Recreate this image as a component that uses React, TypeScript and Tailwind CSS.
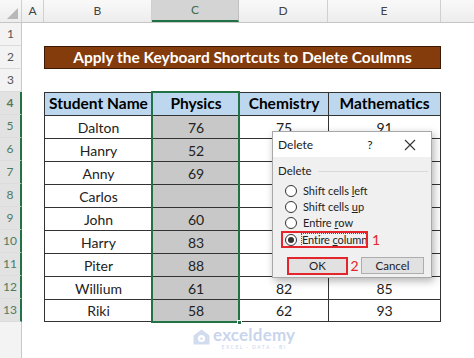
import React from 'react';

type Row = { n: number; name: string; p: string; c: string; m: string };

// D and E values for rows 6-11 sit under the dialog in the screenshot
const data: Row[] = [
  { n: 5, name: 'Dalton', p: '76', c: '75', m: '91' },
  { n: 6, name: 'Hanry', p: '52', c: '', m: '' },
  { n: 7, name: 'Anny', p: '69', c: '', m: '' },
  { n: 8, name: 'Carlos', p: '', c: '', m: '' },
  { n: 9, name: 'John', p: '60', c: '', m: '' },
  { n: 10, name: 'Harry', p: '83', c: '', m: '' },
  { n: 11, name: 'Piter', p: '88', c: '', m: '' },
  { n: 12, name: 'Willium', p: '61', c: '82', m: '85' },
  { n: 13, name: 'Riki', p: '58', c: '62', m: '93' },
];

function RowHead({ n, sel }: { n?: number; sel?: boolean }) {
  return (
    <div
      className={`w-[22px] shrink-0 flex items-center justify-center text-[12px] border-b border-[#dcdcdc] ${
        sel ? 'bg-[#e2e2e2] text-[#4e7a60] border-r-2 border-r-[#217346]' : 'bg-[#f3f3f3] text-[#555] border-r border-r-[#c8c8c8]'
      }`}
    >
      {n}
    </div>
  );
}

function Radio({ on }: { on?: boolean }) {
  return (
    <span className="w-[12px] h-[12px] shrink-0 rounded-full border border-[#333] bg-white flex items-center justify-center">
      {on && <span className="w-[6px] h-[6px] rounded-full bg-[#333]" />}
    </span>
  );
}

function DeleteDialog() {
  return (
    <div className="absolute left-[272px] top-[131px] w-[160px] h-[147px] border border-[#a8a8a8] bg-[#f0f0f0] shadow-[2px_3px_8px_rgba(0,0,0,0.3)] font-['Lato',sans-serif] text-[11px] text-[#222] flex flex-col">
      <div className="h-[25px] bg-white flex items-center pl-[5px] pr-[13px] text-[12px]">
        <span className="flex-1">Delete</span>
        <span className="w-[16px] text-center">?</span>
        <svg className="ml-[24px]" width="16" height="12" viewBox="0 0 16 12">
          <path d="M3 1 L13 11 M13 1 L3 11" stroke="#333" strokeWidth="1.1" fill="none" />
        </svg>
      </div>
      <div className="mt-[7px] h-[14px] flex items-center pl-[5px] pr-[3px] gap-[6px] text-[11.5px]">
        <span>Delete</span>
        <span className="flex-1 h-px bg-[#d9d9d9]" />
      </div>
      <div className="mt-[5px] flex flex-col">
        <div className="h-[16px] flex items-center pl-[12px] gap-[6px]">
          <Radio />
          <span>
            Shift cells <span className="underline">l</span>eft
          </span>
        </div>
        <div className="h-[16px] flex items-center pl-[12px] gap-[6px]">
          <Radio />
          <span>
            Shift cells <span className="underline">u</span>p
          </span>
        </div>
        <div className="h-[16px] flex items-center pl-[12px] gap-[6px]">
          <Radio />
          <span>
            Entire <span className="underline">r</span>ow
          </span>
        </div>
        <div className="h-[17px] flex items-center">
          <div className="ml-[8px] w-[87px] h-[17px] border-2 border-[#e4252b] flex items-center pl-[2px] gap-[5px] overflow-hidden whitespace-nowrap">
            <Radio on />
            <span className="outline outline-1 outline-dotted outline-[#555] leading-[12px] tracking-[-0.1px]">
              Entire <span className="underline">c</span>olumn
            </span>
          </div>
          <span className="ml-[4px] text-[14px] text-[#e4252b]">1</span>
        </div>
      </div>
      <div className="mt-[7px] flex items-center text-[11.5px]">
        <div className="ml-[14px] w-[61px] h-[18px] border-2 border-[#e4252b] bg-[#e1e1e1] flex items-center justify-center">
          OK
        </div>
        <span className="w-[13px] text-center text-[14px] text-[#e4252b]">2</span>
        <div className="w-[63px] h-[17px] border border-[#adadad] bg-[#e1e1e1] flex items-center justify-center">
          Cancel
        </div>
      </div>
    </div>
  );
}

function Watermark() {
  return (
    <div className="absolute left-[193px] top-[329px] flex items-start gap-[3px] text-[#c9d5ec]">
      <svg width="17" height="16" viewBox="0 0 17 16">
        <path d="M8.5 0.5 L16.5 6.5 L16.5 15.5 L0.5 15.5 L0.5 6.5 Z" fill="#d2dcef" />
        <circle cx="8.5" cy="9.5" r="3.6" fill="#ffffff" />
        <path d="M6.5 10.5 L8.5 8 L10.5 10.5 Z" fill="#d2dcef" />
      </svg>
      <div className="flex flex-col items-center -mt-[3px]">
        <span className="text-[17px] font-bold leading-[18px] tracking-[0.2px]">exceldemy</span>
        <span className="text-[5px] leading-[6px] tracking-[1.5px]">EXCEL · DATA · BI</span>
      </div>
    </div>
  );
}

export default function App() {
  const cell = 'flex items-center justify-center border-l border-t border-[#333]';
  return (
    <div className="relative w-[474px] h-[358px] overflow-hidden bg-white font-['Lato',sans-serif] text-black">
      {/* column headers */}
      <div className="flex h-[23px] bg-gradient-to-b from-[#f9f9f9] to-[#ededed] text-[12px] text-[#444] border-b border-[#c6c6c6]">
        <div className="w-[22px] shrink-0 flex items-end justify-end pr-[3px] pb-[3px] border-r border-[#d0d0d0]">
          <svg width="11" height="11" viewBox="0 0 11 11">
            <path d="M11 0 L11 11 L0 11 Z" fill="#b8b8b8" />
          </svg>
        </div>
        <div className="w-[22px] shrink-0 flex items-center justify-center border-r border-[#d0d0d0]">A</div>
        <div className="w-[108px] shrink-0 flex items-center justify-center border-r border-[#d0d0d0]">B</div>
        <div className="w-[87px] shrink-0 flex items-center justify-center bg-[#d4d4d4] text-[#3d6b50] border-r border-[#c0c0c0] border-b-2 border-b-[#217346]">
          C
        </div>
        <div className="w-[89px] shrink-0 flex items-center justify-center border-r border-[#d0d0d0]">D</div>
        <div className="w-[113px] shrink-0 flex items-center justify-center border-r border-[#d0d0d0]">E</div>
        <div className="flex-1" />
      </div>

      {/* row 1 */}
      <div className="flex h-[23px]">
        <RowHead n={1} />
      </div>
      {/* row 2 - title */}
      <div className="flex h-[23px]">
        <RowHead n={2} />
        <div className="w-[22px] shrink-0" />
        <div className="w-[397px] shrink-0 bg-[#843c0c] border border-[#3a1a06] flex items-center justify-center text-white font-bold text-[15.5px]">
          Apply the Keyboard Shortcuts to Delete Coulmns
        </div>
      </div>
      {/* row 3 */}
      <div className="flex h-[23px]">
        <RowHead n={3} />
      </div>
      {/* row 4 - table header */}
      <div className="flex h-[23px] font-bold text-[15.5px]">
        <RowHead n={4} sel />
        <div className="w-[22px] shrink-0" />
        <div className={`w-[108px] shrink-0 bg-[#bdd7ee] ${cell}`}>Student Name</div>
        <div className={`w-[87px] shrink-0 bg-[#bdd7ee] ${cell}`}>Physics</div>
        <div className={`w-[89px] shrink-0 bg-[#bdd7ee] ${cell}`}>Chemistry</div>
        <div className={`w-[113px] shrink-0 bg-[#bdd7ee] border-r ${cell}`}>Mathematics</div>
      </div>
      {data.map((r, i) => {
        const last = i === data.length - 1 ? 'border-b' : '';
        return (
          <div key={r.n} className="flex h-[23px] text-[14px] text-[#222]">
            <RowHead n={r.n} sel />
            <div className="w-[22px] shrink-0" />
            <div className={`w-[108px] shrink-0 ${cell} ${last}`}>{r.name}</div>
            <div className={`w-[87px] shrink-0 bg-[#c8c8c8] ${cell} ${last}`}>{r.p}</div>
            <div className={`w-[89px] shrink-0 ${cell} ${last}`}>{r.c}</div>
            <div className={`w-[113px] shrink-0 border-r ${cell} ${last}`}>{r.m}</div>
          </div>
        );
      })}
      <div className="flex h-[40px]">
        <div className="w-[22px] shrink-0 bg-[#f3f3f3] border-r border-[#c8c8c8]" />
      </div>

      {/* selection outline on C4:C13 */}
      <div className="absolute left-[151px] top-[91px] w-[89px] h-[232px] border-2 border-[#217346] pointer-events-none" />
      <div className="absolute left-[237px] top-[320px] w-[5px] h-[5px] bg-[#217346] border border-white" />

      <DeleteDialog />
      <Watermark />
    </div>
  );
}
